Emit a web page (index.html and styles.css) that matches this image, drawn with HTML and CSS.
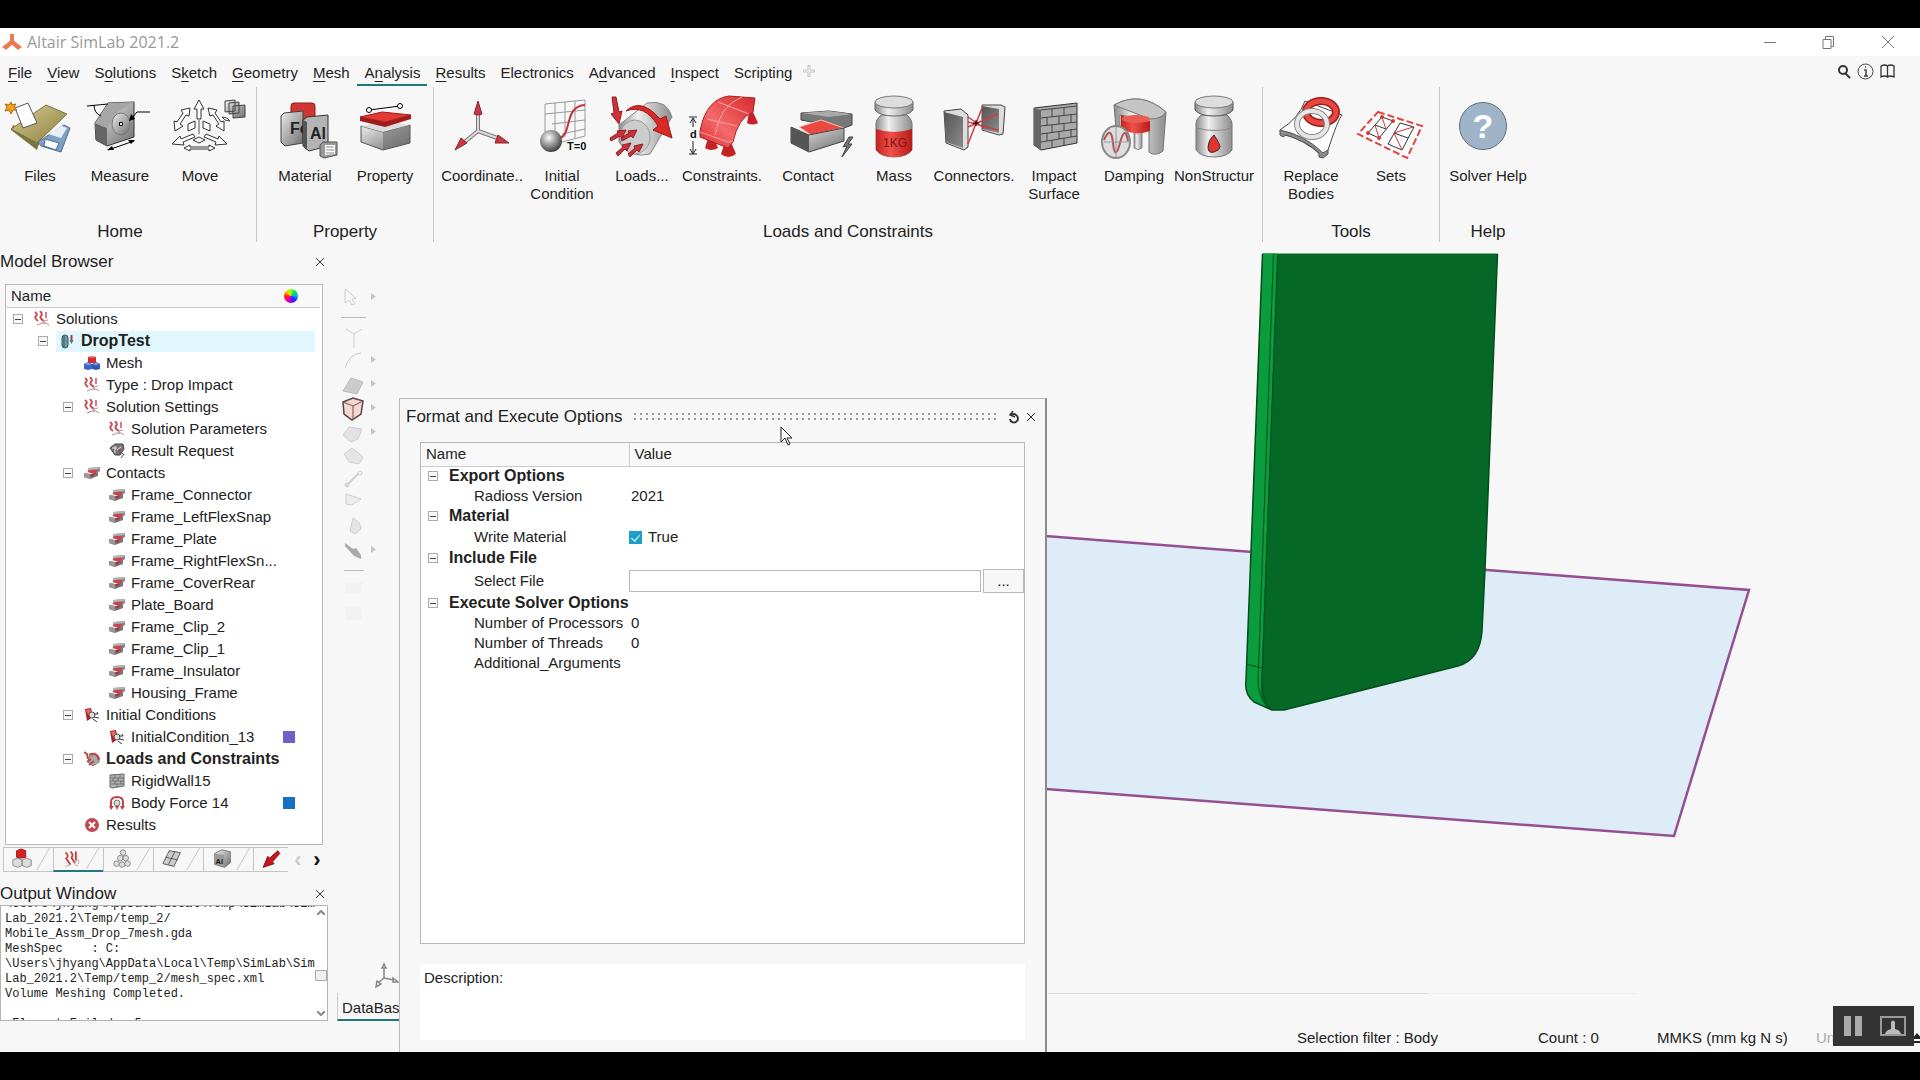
FILE: index.html
```html
<!DOCTYPE html>
<html lang="en">
<head>
<meta charset="utf-8">
<title>Altair SimLab 2021.2</title>
<link rel="stylesheet" href="styles.css">
</head>
<body>
<svg class="defs" aria-hidden="true">
  <defs>
    <linearGradient id="steel" x1="0" y1="0" x2="1" y2="1"><stop offset="0" stop-color="#ececec"/><stop offset="1" stop-color="#6e6e6e"/></linearGradient>
    <linearGradient id="tube" x1="0" y1="0" x2="1" y2="0"><stop offset="0" stop-color="#8a8a8a"/><stop offset=".35" stop-color="#f0f0f0"/><stop offset="1" stop-color="#8c8c8c"/></linearGradient>
    <linearGradient id="redtube" x1="0" y1="0" x2="1" y2="0"><stop offset="0" stop-color="#c32320"/><stop offset=".4" stop-color="#ef5048"/><stop offset="1" stop-color="#b81c1a"/></linearGradient>
    <linearGradient id="redtop" x1="1" y1="0" x2="0" y2="1"><stop offset="0" stop-color="#d62a2c"/><stop offset=".6" stop-color="#f4696a"/><stop offset="1" stop-color="#dd2d30"/></linearGradient>
    <linearGradient id="dark" x1="0" y1="0" x2="1" y2="1"><stop offset="0" stop-color="#555"/><stop offset="1" stop-color="#8b8b8b"/></linearGradient>
    <linearGradient id="gold" x1="0" y1="0" x2="1" y2="1"><stop offset="0" stop-color="#d6cc94"/><stop offset="1" stop-color="#8d7e3c"/></linearGradient>
    <radialGradient id="ball" cx=".4" cy=".35" r=".7"><stop offset="0" stop-color="#fff"/><stop offset=".4" stop-color="#aaa"/><stop offset="1" stop-color="#333"/></radialGradient>
  </defs>
  <symbol id="i-sol" viewBox="0 0 16 16"><path d="M1 1q3 2 1 4t2 5M6 0q3 3 1 5t3 5" fill="none" stroke="#c4505a" stroke-width="2"/><path d="M12 1v6" stroke="#c4505a" stroke-width="1.500"/><path d="M3 14l5-2h4l3 2M10 13q-1-4 4-4" fill="none" stroke="#b9898b"/></symbol>
  <symbol id="i-drop" viewBox="0 0 16 16"><rect x="3" y="2" width="6" height="13" rx="3" fill="#6f9aa2" stroke="#31565e"/><path d="M5 3v11" stroke="#31565e"/><path d="M12.500 2v5" stroke="#a23a55" stroke-width="2"/><path d="M10.500 7h4l-2 4z" fill="#537780"/></symbol>
  <symbol id="i-mesh" viewBox="0 0 16 16"><path d="M4 2l4-1 4 1v6H4z" fill="#d22f2c"/><path d="M4 2l4-1 4 1-4 1z" fill="#f0807c"/><path d="M0 9l4-2 4 2v5l-4 1-4-1z" fill="#3f66c9"/><path d="M8 9l4-2 4 2v5l-4 1-4-1z" fill="#3458b8"/><path d="M1 9l3-1 3 1-3 1zM9 9l3-1 3 1-3 1z" fill="#91abea"/></symbol>
  <symbol id="i-req" viewBox="0 0 16 16"><path d="M1 5l5-4h8l1 5-4 6H6z" fill="#777" stroke="#444"/><path d="M3 5h5M6 3v7M8 7l4-3" stroke="#e5e5e5"/><path d="M9 6l3 1-1 3z" fill="#b33"/><path d="M9 12q4-4 6 0M12 15l3-4" fill="none" stroke="#555"/></symbol>
  <symbol id="i-con" viewBox="0 0 16 16"><path d="M4 3l12-1v4l-3 2-9-1z" fill="#8d8787"/><path d="M4 3l12-1-1 2-11 1z" fill="#b9b4b4"/><path d="M3 7l4-2h7l-3 4z" fill="#d0404a"/><path d="M0 8l6 1 8-2v4l-8 3-6-2z" fill="#7b7676"/><path d="M0 8l6 1v5l-6-2z" fill="#9b9595"/><path d="M6 10l6-2-4 4z" fill="#b02a35"/></symbol>
  <symbol id="i-ini" viewBox="0 0 16 16"><path d="M1 2l6-1 2 9-6 4z" fill="#a9202a"/><path d="M2 3l4-1 1 3-3 3z" fill="#e4686b"/><circle cx="8" cy="8" r="3" fill="#ddd" stroke="#555"/><path d="M10 7h4l-1-2M10 10l5 1M9 12l4 3" fill="none" stroke="#333"/></symbol>
  <symbol id="i-load" viewBox="0 0 16 16"><path d="M5 6l6-3 4 3v5l-6 4-5-4z" fill="#aaa" stroke="#777"/><path d="M0 1l3 2 1 5M5 4q8-4 10 5" fill="none" stroke="#b9474b" stroke-width="2"/><path d="M3 11l4-3M5 14l5-4" stroke="#b9474b" stroke-width="2"/></symbol>
  <symbol id="i-wall" viewBox="0 0 16 16"><path d="M1 2l14-1v12L3 15l-2-1z" fill="#b5b5b5" stroke="#666"/><path d="M2 5h13M2 8h13M2 11h13M6 2v3M11 2v3M4 5v3M9 5v3M6 8v3M12 8v3M8 11v3" stroke="#6c6c6c"/></symbol>
  <symbol id="i-body" viewBox="0 0 16 16"><path d="M2 12V7q0-5 6-5t6 5v5" fill="none" stroke="#c0424a" stroke-width="2"/><path d="M0 11l5 0-3 4zM11 11h5l-3 4zM6 11h4l-2 4z" fill="#c0424a"/><circle cx="8" cy="8" r="3" fill="#d2dccd" stroke="#777"/></symbol>
  <symbol id="i-res" viewBox="0 0 16 16"><circle cx="8" cy="8" r="7" fill="#c0494f"/><path d="M5 5l6 6M11 5l-6 6" stroke="#fff" stroke-width="2"/></symbol>
  <symbol id="i-x" viewBox="0 0 10 10"><path d="M1 1l8 8M9 1l-8 8" stroke="#333" fill="none"/></symbol>
</svg>

<div class="app">
  <header class="titlebar">
    <svg class="logo" width="20" height="18" viewBox="0 0 20 18"><g fill="#ee7a52"><path d="M8 1h4v8H8z"/><path d="M9 7l3 3-8 7-4-3z"/><path d="M11 7l-3 3 8 7 4-3z"/></g></svg>
    <h1>Altair SimLab 2021.2</h1>
    <div class="wincontrols">
      <button aria-label="Minimize"><svg width="12" height="14"><path d="M0 7.500h12" stroke="#777"/></svg></button>
      <button aria-label="Restore"><svg width="13" height="14" fill="none" stroke="#777"><path d="M1 4.500h8v9H1zM3.500 4V1.500h8v10H9"/></svg></button>
      <button aria-label="Close"><svg width="14" height="14"><path d="M1 1l12 12M13 1L1 13" stroke="#777"/></svg></button>
    </div>
  </header>

  <nav class="menubar">
    <a href="#"><u>F</u>ile</a><a href="#"><u>V</u>iew</a><a href="#">S<u>o</u>lutions</a><a href="#">S<u>k</u>etch</a><a href="#"><u>G</u>eometry</a><a href="#"><u>M</u>esh</a><a href="#" class="active">A<u>n</u>alysis</a><a href="#"><u>R</u>esults</a><a href="#">Electronics</a><a href="#">A<u>d</u>vanced</a><a href="#"><u>I</u>nspect</a><a href="#">Scripting</a>
    <button class="add" aria-label="Add tab"><svg width="12" height="12"><path d="M6 0v12M0 6h12" stroke="#c6c6c6" stroke-width="3"/><path d="M6 1v10M1 6h10" stroke="#f7f7f7"/></svg></button>
    <div class="tools">
      <button aria-label="Search"><svg width="14" height="16" fill="none" stroke="#333" stroke-width="2"><circle cx="6" cy="6" r="4"/><path d="M8 9l5 5"/></svg></button>
      <button aria-label="Info"><svg width="17" height="17" fill="none" stroke="#444"><circle cx="8.500" cy="8.500" r="7.500"/><path d="M7 7h2v6M7 13h4M8 4h1" stroke-width="1.500"/></svg></button>
      <button aria-label="Book"><svg width="15" height="15" fill="none" stroke="#333" stroke-width="1.300"><path d="M1 2q4-2 6.500 0V13Q5 11 1 13zM7.500 2q3-2 6.500 0v11q-4-2-6.500 0"/></svg></button>
    </div>
  </nav>

  <section class="ribbon">
    <div class="group home">
      <div class="items">
        <button class="tool"><svg viewBox="0 0 80 68"><path d="M11 38l26 20 3-9-27-16z" fill="#7c743f"/><path d="M11 37l35-24 21 9-30 29z" fill="url(#gold)" stroke="#7d7340"/><path d="M38 50l26-17 6 3-9 24-20-6z" fill="#7f9fc4" stroke="#4c6c93"/><path d="M48 42l14-8 5 2-6 10z" fill="#e8eef5"/><path d="M45 47l14 4-3 7-12-4z" fill="#fff" stroke="#4c6c93"/><path d="M15 16l13-5 9 20-14 5z" fill="#fff" stroke="#555"/><path d="M11 10l1 3 4-1-2 3 3 3-4 0-2 4-2-4-4 1 2-4-2-3 4 1z" fill="#f6a41c" stroke="#a86a10"/></svg><span>Files</span></button>
        <button class="tool"><svg viewBox="0 0 80 68"><path d="M15 31l13-20 26-1v35L27 54l-11-6z" fill="url(#steel)" stroke="#333"/><path d="M15 31l12 5v18l-11-6z" fill="#666"/><path d="M28 11l26-1-15 9-12 17-12-5z" fill="#a6a6a6"/><ellipse cx="41" cy="32" rx="9" ry="11" fill="url(#steel)" stroke="#777"/><path d="M39.500 30.500h3v3h-3z" fill="#fff" stroke="#000"/><path d="M7 14l21-2M14 13q0 8 7 11M70 20H57l-6 7M28 58l26-9" fill="none" stroke="#000"/><path d="M49 29l2-7 4 5zM27 58l5-4 2 4zM55 48l-7 0 3 4z"/></svg><span>Measure</span></button>
        <button class="tool"><svg viewBox="0 0 80 68"><g fill="#fff" stroke="#333"><path d="M39 8l5 9h-3v10h-4V17h-3zM30 16l-9 2 2 3-6 9-3-1 1 10 8-5-3-2 6-9 3 1zM48 16l9 2-2 3 6 9 3-1 0 10-8-5 3-2-6-9-3 1zM12 52l8-8 1 3 12-5 2 3-12 5 1 3zM67 52l-8-8-1 3-12-5-2 3 12 5-1 3zM24 56l6-3v2h19v-2l6 3-6 3v-2H30v2zM28 32l7-3v7l-7 3zM43 29l7 3v7l-7-3zM33 48l6-3 6 3-6 3z"/></g><path d="M39 28v14" stroke="#555"/><g fill="url(#steel)" stroke="#444"><path d="M65 9l10-1v11l-10 1zM69 11l10-1v11l-10 1zM73 14l12-1v12l-12 1z"/><path d="M62 25l5 1 3 3-5-1z" fill="#fff"/></g></svg><span>Move</span></button>
      </div>
      <h2>Home</h2>
    </div>
    <div class="group">
      <div class="items">
        <button class="tool"><svg viewBox="0 0 80 68"><rect x="26" y="11" width="24" height="20" rx="3" fill="#cf3532" stroke="#8b1d1b"/><path d="M16 24l3-3 19-2v32l-18 3-4-4z" fill="url(#steel)" stroke="#444"/><text x="25" y="42" class="glyph">Fe</text><path d="M38 28l4-3 21-2v31l-19 5-6-5z" fill="#b4b4b4" stroke="#333"/><path d="M38 28l4 2v28l-4-4z" fill="#555"/><text x="45" y="47" class="glyph">Al</text><path d="M55 53l3-3 14 0v13l-13 3-4-2z" fill="#999" stroke="#555"/><path d="M60 53h10v9l-10 1z" fill="#fff"/><path d="M61 55h8M61 58h8M61 61h8" stroke="#888"/></svg><span>Material</span></button>
        <button class="tool"><svg viewBox="0 0 80 68"><path d="M16 34l22 6 27-7v18l-27 7-22-8z" fill="url(#steel)" stroke="#555"/><path d="M16 34l24-5 25 4-27 7z" fill="#ddd"/><path d="M38 40l27-7v18l-27 7z" fill="#666" opacity=".5"/><path d="M15 25l25 5 26-7v4l-26 8-25-6z" fill="#a01c1a"/><path d="M15 25l22-5 29 3-26 7z" fill="#e33b33" stroke="#a01c1a"/><path d="M24 18l31-4" stroke="#000"/><circle cx="24" cy="18" r="2.500" fill="#fff" stroke="#000"/><circle cx="55" cy="14" r="2.500" fill="#fff" stroke="#000"/></svg><span>Property</span></button>
      </div>
      <h2>Property</h2>
    </div>
    <div class="group">
      <div class="items">
        <button class="tool"><svg viewBox="0 0 80 68"><path d="M36 20v19L20 52M36 39l22 8" fill="none" stroke="#777" stroke-width="4"/><path d="M36 20v19L20 52M36 39l22 8" fill="none" stroke="#ddd" stroke-width="2"/><g fill="#cc3743" stroke="#842630"><path d="M36 9l4 13q-4 2-8 0zM13 58l6-12 6 5zM67 51l-14 0 3-8z"/></g></svg><span>Coordinate..</span></button>
        <button class="tool"><svg viewBox="0 0 80 68"><path d="M23 12l40-4v36l-23 6M23 12v32M33 11v30M43 10v35M53 9v37M23 22l40-4M30 32l33-4M40 42l23-5" fill="none" stroke="#999"/><path d="M38 46C50 42 42 14 63 13" fill="none" stroke="#c1353e" stroke-width="2"/><circle cx="29" cy="49" r="11" fill="url(#ball)"/><text x="45" y="58" class="small">T=0</text></svg><span>Initial<br>Condition</span></button>
        <button class="tool"><svg viewBox="0 0 80 68"><path d="M17 33L45 11q20-4 25 14L48 62q-20 5-31-12z" fill="url(#tube)" stroke="#888"/><ellipse cx="33" cy="45" rx="15" ry="17" fill="#ccc" stroke="#999"/><path d="M24 19q15-14 34 8l6-3 6 22-19-8 5-4Q43 12 24 19z" fill="#d92a25" stroke="#941a18"/><g fill="#cf3038" stroke="#8f1f26"><path d="M10 5h4l3 15 3-1-3 13-8-10 3-1zM24 38l-4 8-2-2-9 5-1-3 8-5-1-2zM35 38l-4 8-2-2-9 5-1-3 8-5-1-2zM29 51l-4 8-2-2-7 7-2-3 7-6-1-2zM41 52l-4 8-2-2-7 7-2-3 7-6-1-2z"/></g></svg><span>Loads...</span></button>
        <button class="tool"><svg viewBox="0 0 80 68"><g fill="#c42224"><path d="M67 20l4 0 5 11q-5 3-11 0zM26 46h6l4 10q-7 4-13 0zM43 50h6l5 12q-8 6-15 0z"/></g><path d="M47 4l26 2-2 14q-15 6-20 30l-5 6-28-11v-6q6-32 29-35z" fill="url(#redtop)" stroke="#a92022"/><path d="M18 40l28 10 5-1M25 27l30 7M36 10l31 12M60 5q-22 8-27 38" fill="none" stroke="#f6a4a4"/><path d="M11 27v8M11 49v12M8 31l3-5 3 5M8 57l3 5 3-5M7 25h8M7 62h8" fill="none" stroke="#222"/><text x="8" y="46" class="small">d</text></svg><span>Constraints.</span></button>
        <button class="tool wide"><svg viewBox="0 0 80 68"><path d="M33 21l28-2 23 3v11l-8 3-43-8z" fill="#777" stroke="#444"/><path d="M33 21l28-2 23 3-23 3z" fill="#aaa"/><path d="M31 35l22-7 23 8-33 7z" fill="#ea4940" stroke="#f3c5c0"/><path d="M23 35l18 8 35-7v13l-35 11-18-9z" fill="url(#steel)" stroke="#444"/><path d="M23 35l18 8v17l-18-9z" fill="#555"/><path d="M81 45l-6 10 4-1-5 11 10-13-4 0 5-7z" fill="#777" stroke="#444"/></svg><span>Contact</span></button>
        <button class="tool"><svg viewBox="0 0 80 68"><path d="M27 23h26q6 5 5 12v23q-5 7-18 7t-18-7V35q-1-7 5-12z" fill="url(#tube)" stroke="#777"/><path d="M22 37q18 6 36 0v21q-5 7-18 7t-18-7z" fill="url(#redtube)"/><path d="M21 10v8q5 6 19 6t19-6v-8z" fill="url(#tube)" stroke="#666"/><ellipse cx="40" cy="10" rx="19" ry="6" fill="#ddd" stroke="#777"/><text x="29" y="55" class="kg">1KG</text></svg><span>Mass</span></button>
        <button class="tool"><svg viewBox="0 0 80 68"><path d="M10 19l17-2 7 6v32l-4 3-18-7z" fill="#ddd" stroke="#444"/><path d="M10 20l19 5v31l-17-6z" fill="url(#dark)"/><path d="M48 13l19 0 4 2-2 27-4 1-17-5z" fill="#ddd" stroke="#444"/><path d="M48 14l17 3v24l-17-4z" fill="url(#dark)"/><path d="M34 25l16 11M34 35l30-13M34 52l14-36M34 30l30 8" stroke="#d33b3f" stroke-width="1.500"/><path d="M39 31h6M42 28v6" stroke="#000"/></svg><span>Connectors.</span></button>
        <button class="tool"><svg viewBox="0 0 80 68"><path d="M20 16l43-5v40l-36 7-7-5z" fill="#a9a9a9" stroke="#333"/><path d="M20 16l7 2v40l-7-5z" fill="#666"/><path d="M27 18l36-4M27 26l36-4M27 34l36-4M27 42l36-5M27 50l36-6M38 17v8M50 15v8M33 25v8M45 24v8M57 22v8M38 33v8M50 31v8M33 41v8M45 39v8M57 37v8M38 48v8M50 46v8" fill="none" stroke="#444"/></svg><span>Impact<br>Surface</span></button>
        <button class="tool"><svg viewBox="0 0 80 68"><path d="M20 13q27-15 52 7l-3 39q-8 6-14 1V28L26 23v24l-4-10z" fill="url(#tube)" stroke="#777"/><path d="M20 13q27-15 52 7-4 7-16 7z" fill="#c5c5c5" stroke="#777"/><path d="M40 38h8v18q-4 3-8 0z" fill="url(#tube)" stroke="#888"/><path d="M27 23q15 7 29 6v10q-16 6-29-3z" fill="url(#redtube)"/><ellipse cx="42" cy="27" rx="14" ry="4" fill="#ea5b52"/><ellipse cx="22" cy="50" rx="14" ry="16" fill="#ddd" stroke="#888" stroke-width="2"/><path d="M10 48q7-16 9 3t7 0 8-2" fill="none" stroke="#b0505a" stroke-width="2"/><path d="M10 50h25M22 35v30" stroke="#999"/></svg><span>Damping</span></button>
        <button class="tool"><svg viewBox="0 0 80 68"><path d="M27 23h26q6 5 5 12v23q-5 7-18 7t-18-7V35q-1-7 5-12z" fill="url(#tube)" stroke="#777"/><path d="M22 36q18 5 36 0" fill="none" stroke="#888"/><path d="M21 10v8q5 6 19 6t19-6v-8z" fill="url(#tube)" stroke="#555"/><ellipse cx="40" cy="10" rx="19" ry="6" fill="#ddd" stroke="#777"/><path d="M40 43q6 9 6 12t-6 5-6-5 6-12z" fill="#e3342e" stroke="#333"/></svg><span>NonStructur</span></button>
      </div>
      <h2>Loads and Constraints</h2>
    </div>
    <div class="group">
      <div class="items">
        <button class="tool"><svg viewBox="0 0 80 68"><path d="M9 38Q28 26 34 9l37 14q-4 4-15 38l-5 3Q32 46 10 42z" fill="#fff" stroke="#444"/><path d="M9 38v5l3 2 3-2q22 7 33 18v4l4 1 5-4 0-4-5 3Q34 43 9 38z" fill="#8c8c8c" stroke="#555"/><ellipse cx="50" cy="20" rx="15" ry="11" fill="none" stroke="#9c1d1b" stroke-width="8"/><ellipse cx="50" cy="20" rx="15" ry="11" fill="none" stroke="#e84640" stroke-width="5"/><ellipse cx="41" cy="32" rx="15" ry="13" fill="none" stroke="#888" stroke-width="6"/><ellipse cx="41" cy="32" rx="15" ry="13" fill="none" stroke="#e6e6e6" stroke-width="4"/></svg><span>Replace<br>Bodies</span></button>
        <button class="tool"><svg viewBox="0 0 80 68"><path d="M27 20l44 14-15 32L7 42z" fill="#fff" stroke="#e0443e" stroke-width="2" stroke-dasharray="7 3"/><g fill="none" stroke="#333"><path d="M31 25l11 4-14 17-11-5zM24 33l11 4M49 31l14 4-12 23-14-6zM43 41l14 5"/></g><path d="M31 25l4 12M24 33l4 13M62 35l-19 6M43 41l8 17" stroke="#d33"/><g fill="#d33"><circle cx="31" cy="25" r="2"/><circle cx="42" cy="29" r="2"/><circle cx="17" cy="41" r="2"/><circle cx="28" cy="46" r="2"/></g></svg><span>Sets</span></button>
      </div>
      <h2>Tools</h2>
    </div>
    <div class="group last">
      <div class="items">
        <button class="tool"><svg viewBox="0 0 80 68"><circle cx="35" cy="34" r="23.500" fill="#9fb4c8" stroke="#5f6e7c"/><text x="35" y="46" text-anchor="middle" class="qmark">?</text></svg><span>Solver Help</span></button>
      </div>
      <h2>Help</h2>
    </div>
  </section>

  <main class="work">
    <aside class="side">
      <div class="panelhead"><h2>Model Browser</h2><button aria-label="Close Model Browser"><svg width="10" height="10"><use href="#i-x"/></svg></button></div>
      <div class="browser">
        <div class="treehead"><span>Name</span><i class="wheel"></i></div>
        <ul class="tree">
          <li class="l0"><button class="exp" aria-label="Collapse"></button><div><svg><use href="#i-sol"/></svg>Solutions</div></li>
          <li class="l1 sel"><button class="exp" aria-label="Collapse"></button><div><svg><use href="#i-drop"/></svg><b>DropTest</b></div></li>
          <li class="l2"><i></i><div><svg><use href="#i-mesh"/></svg>Mesh</div></li>
          <li class="l2"><i></i><div><svg><use href="#i-sol"/></svg>Type : Drop Impact</div></li>
          <li class="l2"><button class="exp" aria-label="Collapse"></button><div><svg><use href="#i-sol"/></svg>Solution Settings</div></li>
          <li class="l3"><i></i><div><svg><use href="#i-sol"/></svg>Solution Parameters</div></li>
          <li class="l3"><i></i><div><svg><use href="#i-req"/></svg>Result Request</div></li>
          <li class="l2"><button class="exp" aria-label="Collapse"></button><div><svg><use href="#i-con"/></svg>Contacts</div></li>
          <li class="l3"><i></i><div><svg><use href="#i-con"/></svg>Frame_Connector</div></li>
          <li class="l3"><i></i><div><svg><use href="#i-con"/></svg>Frame_LeftFlexSnap</div></li>
          <li class="l3"><i></i><div><svg><use href="#i-con"/></svg>Frame_Plate</div></li>
          <li class="l3"><i></i><div><svg><use href="#i-con"/></svg>Frame_RightFlexSn...</div></li>
          <li class="l3"><i></i><div><svg><use href="#i-con"/></svg>Frame_CoverRear</div></li>
          <li class="l3"><i></i><div><svg><use href="#i-con"/></svg>Plate_Board</div></li>
          <li class="l3"><i></i><div><svg><use href="#i-con"/></svg>Frame_Clip_2</div></li>
          <li class="l3"><i></i><div><svg><use href="#i-con"/></svg>Frame_Clip_1</div></li>
          <li class="l3"><i></i><div><svg><use href="#i-con"/></svg>Frame_Insulator</div></li>
          <li class="l3"><i></i><div><svg><use href="#i-con"/></svg>Housing_Frame</div></li>
          <li class="l2"><button class="exp" aria-label="Collapse"></button><div><svg><use href="#i-ini"/></svg>Initial Conditions</div></li>
          <li class="l3"><i></i><div><svg><use href="#i-ini"/></svg>InitialCondition_13<span class="swatch violet"></span></div></li>
          <li class="l2"><button class="exp" aria-label="Collapse"></button><div><svg><use href="#i-load"/></svg><b>Loads and Constraints</b></div></li>
          <li class="l3"><i></i><div><svg><use href="#i-wall"/></svg>RigidWall15</div></li>
          <li class="l3"><i></i><div><svg><use href="#i-body"/></svg>Body Force 14<span class="swatch blue"></span></div></li>
          <li class="l2"><i></i><div><svg><use href="#i-res"/></svg>Results</div></li>
        </ul>
      </div>
      <div class="tabs">
        <button aria-label="Assembly"><svg viewBox="0 0 50 25"><path d="M48 0L34 24" stroke="#c4c4c4"/><g stroke="#888"><path d="M8 13l5-2 5 2v6l-5 2-5-2zM18 13l5-2 5 2v6l-5 2-5-2z" fill="#ddd"/><path d="M12 3l5-2 5 2v7l-5 1-5-1z" fill="#d8201f" stroke="#8c1b1a"/></g></svg></button>
        <button aria-label="Solutions" class="on"><svg viewBox="0 0 50 25"><path d="M48 0L34 24" stroke="#c4c4c4"/><path d="M10 5q5 3 1 7l5 7M16 4q4 4 1 7l4 6M22 4v10" fill="none" stroke="#c83a38" stroke-width="2"/><path d="M24 20q-6-1-2-5t3 3M10 21l6-2" fill="none" stroke="#b99"/></svg></button>
        <button aria-label="Bodies"><svg viewBox="0 0 50 25"><path d="M48 0L34 24" stroke="#c4c4c4"/><g fill="#ddd" stroke="#888"><circle cx="19" cy="5" r="3"/><circle cx="16" cy="11" r="3"/><circle cx="22" cy="11" r="3"/><circle cx="12" cy="17" r="3"/><circle cx="18" cy="18" r="3"/><circle cx="24" cy="17" r="3"/></g></svg></button>
        <button aria-label="Mesh"><svg viewBox="0 0 50 25"><path d="M48 0L34 24" stroke="#c4c4c4"/><path d="M15 3l12 2-7 15-12-3z" fill="#ccc" stroke="#555"/><path d="M21 4l-7 14M11 10l13 3" stroke="#555"/></svg></button>
        <button aria-label="Material"><svg viewBox="0 0 50 25"><path d="M48 0L34 24" stroke="#c4c4c4"/><path d="M10 6l8-4 9 2v12l-6 5-11-3z" fill="url(#steel)" stroke="#777"/><path d="M10 6l10 2v12l-10-2z" fill="#999"/><text x="11" y="17" class="tiny">Al</text></svg></button>
        <button aria-label="Loads" class="cut"><svg viewBox="0 0 35 25"><path d="M9 21l5-12 2 2 9-8 2 3-8 9 2 2z" fill="#c8141d" stroke="#7d1015"/></svg></button>
        <button class="nav dim" aria-label="Previous">‹</button><button class="nav" aria-label="Next">›</button>
      </div>
      <div class="panelhead out"><h2>Output Window</h2><button aria-label="Close Output Window"><svg width="10" height="10"><use href="#i-x"/></svg></button></div>
      <div class="output">
<pre>\Users\jhyang\AppData\Local\Temp\SimLab\Sim
Lab_2021.2\Temp/temp_2/
Mobile_Assm_Drop_7mesh.gda
MeshSpec    : C:
\Users\jhyang\AppData\Local\Temp\SimLab\Sim
Lab_2021.2\Temp/temp_2/mesh_spec.xml
Volume Meshing Completed.

 Element Failed : 5</pre>
        <div class="scroll"><svg width="8" height="5"><path d="M0 5l4-4 4 4" fill="none" stroke="#888" stroke-width="2"/></svg><span></span><svg width="8" height="5"><path d="M0 0l4 4 4-4" fill="none" stroke="#888" stroke-width="2"/></svg></div>
      </div>
    </aside>

    <section class="view">
      <svg class="scene" viewBox="330 243 1590 778" preserveAspectRatio="xMinYMin meet">
        <path d="M1000 532.500L1749 590 1674 836 1000 785.500z" fill="#deecf7" stroke="#934f92" stroke-width="2.500"/>
        <path d="M1262.500 253.500L1246 680q-2 14 8 22l18 8h12L1458 666q22-6 24-35L1485 570 1497.500 253.500z" fill="#066826"/>
        <path d="M1262.500 253.500L1246 680q-2 14 8 22l14 7q-8-8-7-24L1277.500 253.500z" fill="#0a9c3d"/>
        <path d="M1277.500 254L1262 680q-1 20 10 30M1273.500 254L1258 680q0 14 7 24M1246 664l16 4" fill="none" stroke="#04501d"/>
        <path d="M1262.500 254L1246 680q-2 14 8 22l18 8h12L1458 666q22-6 24-35L1485 570 1497.500 254" fill="none" stroke="#044d1c" stroke-width="1.500"/>
        <path d="M1048 993.500h380" stroke="#dcdcdc"/><path d="M1428 993.500h210" stroke="#efefef"/>
        <g fill="none" stroke="#888" stroke-width="1.500"><path d="M384 968v10l-6 5M384 978l10 2"/><path d="M382 968l2-4 2 4zM376 987l1-6 4 3zM398 982l-5-4v4z"/></g>
      </svg>
      <div class="vtools">
        <svg viewBox="340 285 40 340" fill="none">
          <g stroke="#cfcfcf"><path d="M345 289v14l4-3 3 5 3-1-3-5 4-1z"/><path d="M346 329l8 5 8-5M354 334v14"/><path d="M345 368q4-14 16-15"/><path d="M346 504v-10l15 5-9 6z" fill="#ededed"/><path d="M353 518q8 4 8 11l-6 5-5-3z" fill="#e4e4e4"/><path d="M346 486l12-12" stroke-width="2"/><circle cx="347" cy="485" r="2"/><circle cx="360" cy="473" r="2"/><path d="M343 435l6-8 13 2-4 10-7 3z" fill="#e5e1e5"/><path d="M344 454l8-6 11 9-4 7-10-2z" fill="#e5e5e5"/></g>
          <path d="M341 317.500h25M344 570.500h20" stroke="#bbb"/>
          <path d="M343 391l8-13 12 4-6 12z" fill="#ccc" stroke="#bbb"/>
          <path d="M343 402l10-4 10 3-2 13-9 6-8-6z" fill="#f6d6d2" stroke="#5a4545" stroke-width="1.500"/><path d="M343 402l10 4 10-5M353 406v13" stroke="#77534f"/>
          <path d="M345 543l8 6 3-1 5 7v4l-7-3-9-10z" fill="#aaa"/>
          <path d="M345 582h17v11h-17zM345 607h17v13h-17z" fill="#f2f2f2"/>
          <path d="M371 293l5 3.500-5 3.500zM371 356l5 3.500-5 3.500zM371 380l5 3.500-5 3.500zM371 404l5 3.500-5 3.500zM371 428l5 3.500-5 3.500zM371 546l5 3.500-5 3.500z" fill="#c5c5c5"/>
        </svg>
      </div>
      <a href="#" class="dbtab">DataBase</a>
    </section>
  </main>

  <footer class="status"><span class="filter">Selection filter : Body</span><span class="count">Count : 0</span><span class="units">MMKS (mm kg N s)</span><span class="undo">Un</span><svg width="8" height="14"><path d="M0 8l5-6 5 6zM0 10h8v2H0z" fill="#222"/></svg></footer>

  <div class="dialog" role="dialog" aria-labelledby="dlg">
    <div class="dlghead"><h2 id="dlg">Format and Execute Options</h2><i class="grip"></i>
      <button aria-label="Reset"><svg width="12" height="13" fill="none" stroke="#333" stroke-width="2"><path d="M3 4q3-2 5 0a4 4 0 1 1-6 4"/><path d="M5 0L2 4l5 2" stroke-width="1.500"/></svg></button>
      <button aria-label="Close"><svg width="10" height="10"><use href="#i-x"/></svg></button></div>
    <div class="options">
      <table>
        <thead><tr><th>Name</th><th>Value</th></tr></thead>
        <tbody>
          <tr class="sec"><td colspan="2"><button class="exp" aria-label="Collapse"></button><b>Export Options</b></td></tr>
          <tr><td>Radioss Version</td><td>2021</td></tr>
          <tr class="sec"><td colspan="2"><button class="exp" aria-label="Collapse"></button><b>Material</b></td></tr>
          <tr class="mid"><td><label for="wm">Write Material</label></td><td><div class="check"><input type="checkbox" id="wm" checked><span>True</span></div></td></tr>
          <tr class="sec"><td colspan="2"><button class="exp" aria-label="Collapse"></button><b>Include File</b></td></tr>
          <tr class="tall"><td><label for="sf">Select File</label></td><td><div class="file"><input type="text" id="sf"><button>...</button></div></td></tr>
          <tr class="sec"><td colspan="2"><button class="exp" aria-label="Collapse"></button><b>Execute Solver Options</b></td></tr>
          <tr><td>Number of Processors</td><td>0</td></tr>
          <tr><td>Number of Threads</td><td>0</td></tr>
          <tr><td>Additional_Arguments</td><td></td></tr>
        </tbody>
      </table>
    </div>
    <div class="desc">Description:</div>
  </div>

  <svg class="cursor" width="14" height="20" viewBox="0 0 14 20"><path d="M1 1v15l4-4 3 7 2-1-3-6h5z" fill="#fff" stroke="#222"/></svg>

  <div class="recorder">
    <button aria-label="Pause"><svg width="18" height="20"><path d="M0 0h7v20H0zM11 0h7v20h-7z" fill="#aaa"/></svg></button>
    <button aria-label="Picture"><svg width="26" height="20"><path d="M1 1h24v18H1z" fill="none" stroke="#999" stroke-width="2"/><path d="M5 18q1-4 6-5V6q2-3 4 0v7q5 1 6 5z" fill="#bbb"/></svg></button>
  </div>
</div>
</body>
</html>
```
FILE: styles.css
```css
* { box-sizing: border-box; }
body {
  margin: 0;
  height: 100vh;
  padding: 28px 0;
  background: #000;
  color: #222;
  font: 15px/18px "Liberation Sans", Arial, sans-serif;
}
h1, h2 { margin: 0; font-weight: normal; }
button { margin: 0; padding: 0; border: 0; background: none; font: inherit; color: inherit; }
a { color: inherit; text-decoration: none; }
svg { display: block; }
.defs { position: absolute; width: 0; height: 0; }

.app {
  position: relative;
  display: flex;
  flex-direction: column;
  height: 100%;
  overflow: hidden;
  background: #f7f7f7;
}

/* title bar */
.titlebar { display: flex; align-items: center; flex: none; height: 28px; padding-left: 2px; background: #fff; }
.titlebar h1 { margin-left: 5px; font: 16px/28px "Open Sans", "Noto Sans", sans-serif; color: #999; }
.wincontrols { display: flex; gap: 46px; margin-left: auto; padding-right: 25px; }

/* menu */
.menubar { display: flex; flex: none; height: 31px; }
.menubar a { height: 30px; padding: 8px 7px 0 8px; }
.menubar a.active { border-bottom: 2px solid #23777c; }
.menubar u { text-underline-offset: 3px; }
.add { align-self: flex-start; margin: 9px 0 0 4px; }
.tools { display: flex; align-items: center; gap: 6px; margin-left: auto; padding-right: 25px; }

/* ribbon */
.ribbon { display: flex; flex: none; height: 156px; padding-bottom: 1px; }
.group { display: flex; flex-direction: column; padding: 5px 8px 0; border-right: 1px solid #c8c8c8; }
.group.home { padding: 5px 16px 0 0; }
.group.last { border: 0; }
.group h2 { margin-top: auto; font-size: 17px; line-height: 20px; text-align: center; }
.items { display: flex; }
.tool { display: flex; flex-direction: column; align-items: center; gap: 7px; width: 80px; }
.tool.wide { width: 92px; }
.tool svg { width: 80px; height: 68px; overflow: visible; }
.tool span { white-space: nowrap; }
.glyph { font-size: 16px; font-weight: bold; fill: #222; }
.small { font-size: 11px; font-weight: bold; fill: #111; }
.kg { font-size: 12px; fill: #7c1512; }
.tiny { font-size: 8px; font-weight: bold; fill: #111; }
.qmark { font-size: 34px; font-weight: bold; fill: #fff; }

/* left side */
.work { display: flex; flex: 1; min-height: 0; }
.side { display: flex; flex-direction: column; flex: none; width: 330px; }
.panelhead { display: flex; align-items: center; justify-content: space-between; flex: none; height: 37px; padding-right: 5px; }
.panelhead h2 { font-size: 17px; line-height: 20px; }
.browser { display: flex; flex-direction: column; flex: 1; min-height: 0; margin: 4px 7px 0 5px; border: 1px solid #b8b8b8; background: #fff; }
.treehead { display: flex; align-items: center; flex: none; height: 23px; margin-right: 2px; padding: 0 5px; background: #f8f8f8; border-bottom: 1px solid #ccc; }
.treehead span { flex: 1; }
.wheel { width: 14px; height: 14px; margin-right: 17px; border-radius: 50%; background: conic-gradient(#8f0, #0d6, #0af, #22f, #90e, #f08, #f20, #fc0, #8f0); }
.tree { list-style: none; margin: 0; padding: 0; }
.tree li { display: flex; align-items: center; height: 22px; padding: 0 7px 0 7px; }
.tree .l1 { padding-left: 32px; }
.tree .l2 { padding-left: 57px; }
.tree .l3 { padding-left: 82px; }
.tree li > i { width: 10px; }
.tree li > div { display: flex; align-items: center; flex: 1; height: 21px; margin-left: 8px; padding-left: 3px; white-space: nowrap; }
.tree svg { flex: none; width: 16px; height: 16px; margin-right: 6px; }
.tree .sel > div { background: #e0f7fe; }
b { font-size: 16px; }
.exp { flex: none; width: 10px; height: 10px; border: 1px solid #aaa; background: linear-gradient(#444, #444) center / 6px 1px no-repeat #f8f8f8; }
.swatch { width: 12px; height: 12px; margin-left: auto; margin-right: 20px; }
.violet { background: #7460c4; }
.blue { background: #1472c4; }

.tabs { display: flex; flex: none; height: 26px; margin: 2px 0 0 3px; }
.tabs button { width: 50px; height: 25px; border: solid #c4c4c4; border-width: 1px 0 1px 1px; }
.tabs button.on { border-bottom: 2px solid #23777c; }
.tabs button.cut { width: 35px; }
.tabs svg { width: 100%; height: 100%; }
.tabs button.nav { width: 18px; border: 0; font-size: 22px; font-weight: bold; color: #111; }
.tabs button.dim { width: 20px; color: #ccc; }

.panelhead.out { height: 32px; padding-top: 9px; }
.output { display: flex; flex: none; align-items: center; height: 116px; margin: 0 2px 0 0; border: 1px solid #b4b4b4; background: #fff; overflow: hidden; }
.output pre { flex: 1; margin: 0; padding: 2px 0 0 4px; font: 12px/15px "Liberation Mono", "Courier New", monospace; }
.scroll { display: flex; flex-direction: column; align-items: center; justify-content: space-between; width: 13px; height: 106px; }
.scroll span { width: 12px; height: 11px; margin-top: 24px; border: 1px solid #aaa; background: #f0f0f0; }

/* 3D view */
.view { position: relative; display: flex; flex-direction: column; justify-content: space-between; flex: 1; padding: 42px 0 0 7px; }
.scene { position: absolute; inset: 0; width: 100%; height: 100%; }
.vtools { margin-left: 3px; }
.vtools svg { width: 40px; height: 340px; }
.dbtab { position: relative; align-self: flex-start; height: 28px; padding: 6px 20px 0 4px; border-left: 1px solid #ccc; border-bottom: 2px solid #23777c; }

/* status bar */
.status { display: flex; align-items: center; flex: none; height: 31px; padding-top: 2px; justify-content: flex-end; }
.filter { width: 241px; }
.count { width: 119px; }
.units { width: 159px; }
.undo { width: 96px; color: #aaa; }

/* floating dialog */
.dialog {
  position: absolute;
  left: 399px;
  top: 370px;
  bottom: 0;
  width: 648px;
  display: flex;
  flex-direction: column;
  padding: 0 20px 12px;
  background: #f7f7f7;
  border: 1px solid #bbb;
  border-right: 2px solid #8a8a8a;
  border-bottom: 0;
}
.dlghead { display: flex; align-items: center; flex: none; height: 36px; margin: 0 -11px 0 -14px; gap: 6px; }
.dlghead h2 { font-size: 17px; line-height: 20px; }
.grip { flex: 1; height: 8px; margin: 0 3px 0 6px; background: radial-gradient(circle at 1px 1px, #999 1px, transparent 1px) 0 0 / 6px 5px; }
.options { flex: 1; margin: 7px 0 20px; border: 1px solid #b8b8b8; background: #fff; }
table { width: 100%; border-collapse: collapse; table-layout: fixed; }
th { height: 23px; padding: 0 0 0 5px; background: #f8f8f8; border-bottom: 1px solid #ccc; font-weight: normal; text-align: left; }
th:first-child { width: 208px; border-right: 1px solid #ccc; }
td { height: 20px; padding: 0 0 0 2px; white-space: nowrap; }
td:first-child { padding-left: 53px; }
.sec td:first-child { padding-left: 7px; }
.sec .exp { margin-right: 11px; vertical-align: 1px; }
.mid td { height: 22px; }
.tall td { height: 25px; }
.check { display: flex; align-items: center; gap: 6px; margin-left: -2px; }
.check input {
  appearance: none; width: 13px; height: 13px; margin: 0;
  background: #1c9fcb;
}
.check input:checked::after { content: ""; display: block; width: 4px; height: 7px; margin: 2px 0 0 4px; border: solid #fff; border-width: 0 1px 1px 0; rotate: 40deg; }
.file { display: flex; gap: 2px; margin-left: -2px; }
.file input { flex: 1; min-width: 0; height: 22px; margin-top: 1px; border: 1px solid #b8b8b8; background: #fff; }
.file button { width: 41px; height: 24px; border: 1px solid #bbb; background: #f7f7f7; }
.desc { flex: none; height: 76px; padding: 5px 4px; background: #fff; }

.cursor { position: absolute; left: 780px; top: 398px; }
.recorder { position: absolute; right: 6px; bottom: 6px; display: flex; align-items: center; justify-content: space-between; width: 81px; height: 40px; padding: 0 8px 0 11px; background: #333; }
```
